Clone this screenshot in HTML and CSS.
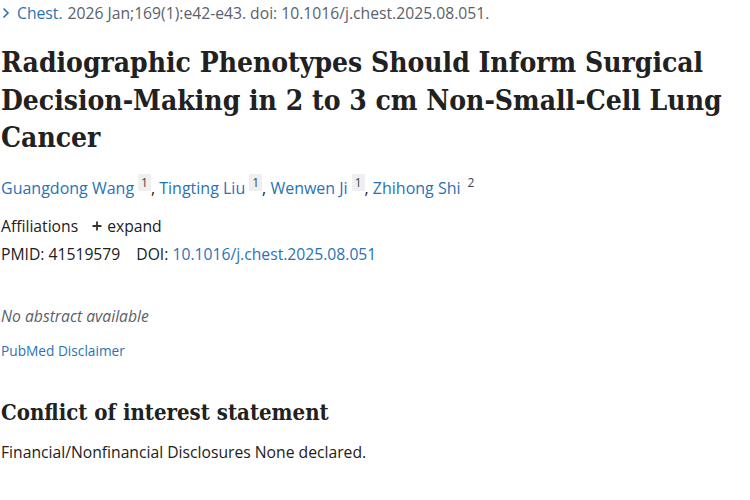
FILE: index.html
```html
<!DOCTYPE html>
<html lang="en">
<head>
<meta charset="utf-8">
<link rel="stylesheet" href="styles.css">
</head>
<body>
<main class="article">
  <div class="citation">
    <span class="journal"><svg class="chev" width="10" height="12" viewBox="0 0 10 12"><path d="M2.5 1.5 L7 6 L2.5 10.5" fill="none" stroke="#2a72b5" stroke-width="1.6"/></svg>Chest.</span>
    <span class="cit">2026 Jan;169(1):e42-e43. doi: 10.1016/j.chest.2025.08.051.</span>
  </div>
  <h1 class="title">Radiographic Phenotypes Should Inform Surgical Decision-Making in 2 to 3 cm Non-Small-Cell Lung Cancer</h1>
  <div class="authors">
    <a class="author">Guangdong Wang</a><sup class="aff">1</sup>, <a class="author">Tingting Liu</a><sup class="aff">1</sup>, <a class="author">Wenwen Ji</a><sup class="aff">1</sup>, <a class="author">Zhihong Shi</a><sup class="aff plain">2</sup>
  </div>
  <div class="affil">Affiliations <span class="expand"><svg class="plus" width="10" height="10" viewBox="0 0 10 10"><path d="M5 0.5 V9.5 M0.5 5 H9.5" stroke="#333" stroke-width="1.8"/></svg> expand</span></div>
  <div class="ids"><span>PMID: 41519579</span><span>DOI: <a class="link">10.1016/j.chest.2025.08.051</a></span></div>
  <p class="noabs">No abstract available</p>
  <a class="disclaimer">PubMed Disclaimer</a>
  <h2 class="coi">Conflict of interest statement</h2>
  <p class="fin">Financial/Nonfinancial Disclosures None declared.</p>
</main>
</body>
</html>
```
FILE: styles.css
```css
html, body { margin: 0; padding: 0; background: #fff; }
body { font-family: "Open Sans", "Noto Sans", sans-serif; color: #212121; }
.article { padding: 0 0 0 1px; }
.citation { font-size: 15.7px; line-height: 20px; padding-top: 3px; display: flex; gap: 5px; color: #5b616b; }
.journal { color: #2a72b5; display: flex; align-items: center; gap: 6px; }
.chev { display: block; }
.title { font-family: "DejaVu Serif Condensed", "DejaVu Serif", serif; font-stretch: condensed; font-weight: bold; font-size: 28px; line-height: 37.5px; margin: 21px 0 0; color: #212121; }
.authors { font-size: 16px; margin-top: 20px; line-height: 22px; color: #212121; }
.author { color: #2a72b5; }
.aff { font-size: 12px; line-height: 10px; background: #efefef; padding: 0 3px; margin-left: 4px; vertical-align: 7px; color: #444; }
.aff.plain { background: none; }
.affil { font-size: 15.7px; margin-top: 16px; line-height: 22px; display: flex; align-items: center; }
.expand { margin-left: 14px; display: inline-flex; align-items: center; gap: 5px; }
.plus { display: block; }
.ids { font-size: 15.7px; margin-top: 6px; line-height: 22px; display: flex; gap: 16px; }
.link { color: #2a72b5; }
.noabs { font-style: italic; color: #5b616b; font-size: 15.7px; margin: 40px 0 0; line-height: 22px; }
.disclaimer { display: block; color: #2a72b5; font-size: 13.7px; margin-top: 14px; line-height: 20px; }
.coi { font-family: "DejaVu Serif Condensed", "DejaVu Serif", serif; font-stretch: condensed; font-weight: bold; font-size: 22px; line-height: 28px; margin: 37px 0 0; }
.fin { font-size: 15.7px; margin: 15px 0 0; line-height: 22px; }
```
